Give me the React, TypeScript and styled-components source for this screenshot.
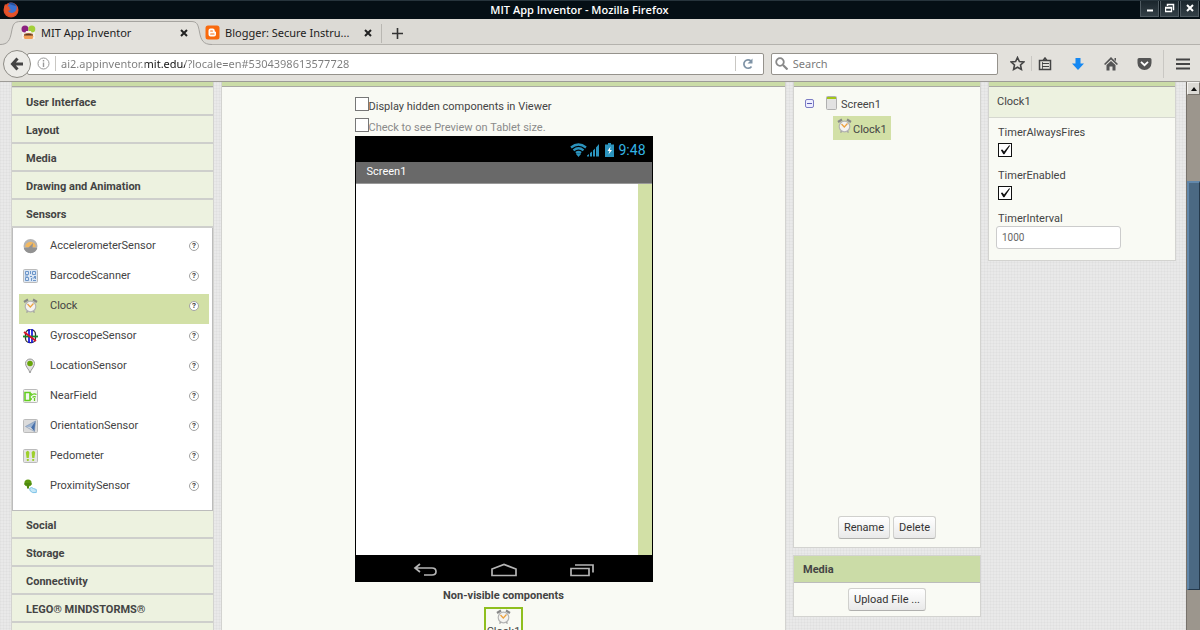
import React from "react";
import styled, { createGlobalStyle } from "styled-components";

const Global = createGlobalStyle`
  * { box-sizing: border-box; }
  body { margin: 0; overflow: hidden; }
  button, input { font: inherit; color: inherit; }
  svg { flex: none; }
`;

const line = "#bcbcbc";

/* ---------- browser window ---------- */

const Window = styled.div`
  height: 100vh;
  display: flex;
  flex-direction: column;
  overflow: hidden;
  font: 11px/16px "Noto Sans", sans-serif;
  color: #1c1c1c;
`;

const TitleBar = styled.header`
  flex: none;
  display: flex;
  align-items: center;
  height: 19px;
  padding-left: 3px;
  background: #050f15;
  border-top: 1px solid #27343c;
  color: #fff;
`;

const WindowTitle = styled.div`
  flex: 1;
  text-align: center;
  font-family: "Open Sans", sans-serif;
  font-weight: 600;
`;

const WindowButton = styled.button`
  display: flex;
  align-items: center;
  justify-content: center;
  width: 19px;
  height: 16px;
  margin-bottom: 3px;
  margin-right: 1px;
  padding: 0;
  border: 1px solid #4f5a61;
  border-top: 0;
  background: linear-gradient(#1a252c, #333f46);
`;

const TabStrip = styled.nav`
  flex: none;
  display: flex;
  height: 27px;
  background: linear-gradient(#dcdad5 25px, #b4b2ad 25px, #b4b2ad 26px, #e3e1dc 26px);
`;

const TabEdge = styled.svg<{ $end?: boolean }>`
  width: 21px;
  height: 27px;
  margin-right: ${(p) => (p.$end ? -7 : 0)}px;
`;

const Tab = styled.div<{ $active?: boolean }>`
  display: flex;
  align-items: center;
  width: 170px;
  height: ${(p) => (p.$active ? 27 : 26)}px;
  padding-top: ${(p) => (p.$active ? 0 : 1)}px;
  gap: 5px;
  background: ${(p) => (p.$active ? "#e3e1dc" : "transparent")};
  box-shadow: ${(p) => (p.$active ? "inset 0 2px #dcdad5, inset 0 3px #a5a39f" : "none")};
`;

const TabTitle = styled.a`
  flex: 1;
  color: #1c1c1c;
  text-decoration: none;
  white-space: nowrap;
`;

const TabClose = styled.button`
  display: flex;
  margin-right: 3px;
  padding: 0;
  border: 0;
  background: none;
`;

const NewTab = styled.button`
  display: flex;
  align-items: center;
  height: 19px;
  margin: 5px 0 0 6px;
  padding: 0 10px;
  border: 0;
  border-left: 1px solid #b9b7b2;
  background: none;
`;

const NavBar = styled.div`
  flex: none;
  display: flex;
  align-items: center;
  height: 36px;
  padding: 0 10px 0 3px;
  background: #e3e1dc;
  border-bottom: 1px solid #9d9b97;
`;

const BackButton = styled.button`
  position: relative;
  display: flex;
  align-items: center;
  justify-content: center;
  flex: none;
  width: 28px;
  height: 28px;
  padding: 0;
  border: 1px solid #8d8b85;
  border-radius: 50%;
  background: #ecebe7;
`;

const Field = styled.div<{ $size: number; $joined?: boolean }>`
  flex: ${(p) => `${p.$size} 1 ${p.$size}px`};
  display: flex;
  align-items: center;
  gap: 5px;
  height: 22px;
  min-width: 0;
  margin-left: ${(p) => (p.$joined ? -4 : 7)}px;
  padding: 0 8px 0 ${(p) => (p.$joined ? 9 : 3)}px;
  background: #fff;
  border: 1px solid #95928c;
  border-radius: 2px;
`;

const Divider = styled.span<{ $tall?: boolean }>`
  flex: none;
  width: 1px;
  height: ${(p) => (p.$tall ? 28 : 15)}px;
  background: #c9c7c3;
`;

const AddressInput = styled.input`
  flex: 1;
  min-width: 0;
  padding: 0;
  border: 0;
  outline: 0;
  color: transparent;
  background: linear-gradient(to right, #7b7b7b 84px, #111 84px, #111 124px, #7b7b7b 124px);
  background-clip: text;
  -webkit-background-clip: text;
`;

const SearchInput = styled.input`
  flex: 1;
  min-width: 0;
  padding: 0;
  border: 0;
  outline: 0;
  background: transparent;
  &::placeholder { color: #7b7b7b; opacity: 1; }
`;

const PlainButton = styled.button`
  display: flex;
  padding: 0;
  border: 0;
  background: none;
`;

const ToolIcons = styled.div`
  flex: none;
  display: flex;
  align-items: center;
  gap: 11px;
  margin-left: 12px;
`;

const IconGroup = styled.div<{ $gap: number }>`
  display: flex;
  align-items: center;
  gap: ${(p) => p.$gap}px;
`;

/* ---------- page ---------- */

const Page = styled.main`
  flex: 1;
  display: flex;
  min-height: 0;
  background-color: #e9e9e9;
  background-image:
    repeating-linear-gradient(90deg, rgba(0, 0, 0, 0.025) 0 1px, transparent 1px 3px),
    repeating-linear-gradient(rgba(0, 0, 0, 0.025) 0 1px, transparent 1px 3px);
  font: 11px/14px Roboto, sans-serif;
  color: #444;
`;

const Columns = styled.div`
  flex: 1;
  display: grid;
  grid-template-columns: 203px minmax(300px, 1fr) 188px 188px;
  column-gap: 7px;
  align-items: start;
  padding: 0 10px 0 11px;
  min-width: 0;
`;

const Panel = styled.section`
  background: #f9faf4;
  border: 1px solid #d3d3d0;
  border-top: 0;
  &::before {
    content: "";
    display: block;
    height: 4px;
    background: #cbdca7;
    border-bottom: 1px solid #a9a9a3;
  }
`;

const Palette = styled.div`
  border-top: 1px solid #d8d9d5;
`;

const Category = styled.button`
  display: block;
  width: 100%;
  height: 28px;
  padding: 3px 14px 0;
  border: 0;
  border-bottom: 2px solid #cecfcc;
  background: #edf2e0;
  color: #444;
  font-weight: 700;
  text-align: left;
`;

const ItemList = styled.ul`
  list-style: none;
  margin: 0;
  padding: 6px 3px 6px 6px;
  background: #fff;
  border: 1px solid ${line};
  border-width: 0 1px 1px;
`;

const Item = styled.li<{ $selected?: boolean }>`
  display: flex;
  align-items: center;
  height: 30px;
  padding: 0 10px 7px 4px;
  background: ${(p) => (p.$selected ? "#d2e0a6" : "transparent")};
`;

const ItemButton = styled.button`
  flex: 1;
  display: flex;
  align-items: center;
  gap: 12px;
  padding: 0;
  border: 0;
  background: none;
  text-align: left;
`;

const Help = styled.button`
  display: flex;
  align-items: center;
  justify-content: center;
  width: 10px;
  height: 10px;
  padding: 0;
  border: 1px solid #a3a3a3;
  border-radius: 50%;
  background: #fff;
  font-size: 8px;
  line-height: 8px;
  font-weight: 700;
`;

const ViewerPanel = styled(Panel)`
  min-height: 100vh;
`;

const ViewerBody = styled.div`
  width: 298px;
  margin: 0 auto;
  padding-top: 10px;
`;

const CheckRow = styled.label<{ $muted?: boolean }>`
  display: flex;
  align-items: flex-start;
  height: 21px;
  white-space: nowrap;
  color: ${(p) => (p.$muted ? "#8b8b8b" : "#444")};
  span { padding-top: 3px; }
`;

const CheckBox = styled.input.attrs({ type: "checkbox" })`
  appearance: none;
  flex: none;
  display: block;
  width: 14px;
  height: 14px;
  margin: 0;
  border: 1px solid #777;
  background: #fff;
  &:checked { border: 1px solid #111; }
  &:checked::before {
    content: "";
    display: block;
    width: 12px;
    height: 12px;
    background: #111;
    clip-path: polygon(15% 50%, 28% 45%, 42% 62%, 85% 10%, 92% 14%, 45% 86%, 36% 86%);
  }
`;

const Phone = styled.div`
  margin-top: -3px;
  border: 1px solid #000;
  background: #fff;
`;

const StatusBar = styled.div`
  display: flex;
  align-items: center;
  justify-content: flex-end;
  gap: 5px;
  height: 25px;
  padding-right: 6px;
  background: #000;
  color: #33b5e5;
  font-size: 14px;
`;

const ScreenTitle = styled.div`
  height: 22px;
  padding: 3px 11px;
  background: #696969;
  border-bottom: 1px solid #999;
  color: #fff;
`;

const Screen = styled.div`
  display: flex;
  justify-content: flex-end;
  height: 371px;
`;

const ScreenGutter = styled.div`
  width: 14px;
  background: #d2e0a6;
`;

const PhoneNav = styled.div`
  display: flex;
  align-items: center;
  justify-content: center;
  gap: 51px;
  height: 26px;
  padding-top: 3px;
  background: #000;
`;

const NonVisibleTitle = styled.h2`
  margin: 7px 0 4px;
  font-size: 11px;
  line-height: 14px;
  text-align: center;
`;

const NonVisibleItem = styled.div`
  display: flex;
  flex-direction: column;
  align-items: center;
  width: 39px;
  margin: 0 auto;
  border: 2px solid #8fbf1f;
`;

const Stack = styled.div`
  display: flex;
  flex-direction: column;
  gap: 7px;
`;

const TreeArea = styled.div`
  height: 429px;
  padding: 6px 11px;
`;

const TreeRow = styled.div`
  display: flex;
  align-items: center;
  height: 20px;
  margin-bottom: 3px;
  gap: 3px;
  span { padding-top: 4px; }
`;

const Toggle = styled.button`
  display: flex;
  align-items: center;
  justify-content: center;
  width: 9px;
  height: 9px;
  margin-right: 9px;
  padding: 0;
  border: 1px solid #7c7cc4;
  border-radius: 2px;
  background: #eef;
  &::before {
    content: "";
    width: 5px;
    height: 1px;
    background: #5b5bb0;
  }
`;

const TreeChild = styled.button`
  display: flex;
  align-items: center;
  gap: 1px;
  height: 24px;
  margin-left: 28px;
  padding: 0 4px;
  border: 0;
  background: #d2e0a6;
  svg { margin-bottom: 4px; }
  span { padding-top: 3px; }
`;

const ButtonRow = styled.div<{ $short?: boolean }>`
  display: flex;
  justify-content: center;
  gap: 3px;
  padding: ${(p) => (p.$short ? "5px 0" : "0 0 8px")};
`;

const PushButton = styled.button`
  height: 23px;
  padding: 0 5px;
  border: 1px solid #d0d0cd;
  border-bottom-color: #b0b0ae;
  border-radius: 3px;
  background: linear-gradient(#fff, #e9e9e9);
  color: #333;
`;

const MediaPanel = styled.section`
  background: #f9faf4;
  border: 1px solid #d3d3d0;
`;

const MediaTitle = styled.h2`
  margin: 0;
  height: 27px;
  padding: 7px 9px;
  background: #cbdca7;
  border-bottom: 1px solid ${line};
  font-size: 11px;
  line-height: 14px;
`;

const PropsTitle = styled.h2`
  margin: 0;
  height: 31px;
  padding: 8px;
  background: #edf2e0;
  border-bottom: 1px solid #d6d8d0;
  font-size: 11px;
  line-height: 14px;
  font-weight: 400;
`;

const PropsBody = styled.div`
  padding: 8px 7px 11px;
`;

const Property = styled.div`
  height: 43px;
  padding-left: 2px;
  label { display: block; margin-bottom: 3px; }
`;

const IntervalProperty = styled.div`
  label { display: block; margin: 0 0 0 2px; }
`;

const NumberInput = styled.input`
  display: block;
  width: 125px;
  height: 23px;
  padding: 0 5px;
  border: 1px solid #ccc;
  border-radius: 3px;
  background: #fff;
  color: #666;
  font-size: 10px;
`;

const ScrollTrack = styled.div`
  flex: none;
  display: flex;
  flex-direction: column;
  width: 14px;
  background: #9c968d;
  border-left: 1px solid #77726b;
`;

const ScrollUp = styled.button`
  display: flex;
  align-items: center;
  justify-content: center;
  height: 13px;
  padding: 0;
  border: 1px solid #f4f3f0;
  border-right-color: #77726b;
  border-bottom-color: #77726b;
  background: #dcdad5;
`;

const ScrollGap = styled.div<{ $size: number }>`
  flex: ${(p) => p.$size};
`;

const ScrollThumb = styled.div`
  flex: 409;
  background: #4b6983;
  border: 1px solid #6288ab;
  border-width: 2px 1px 1px 2px;
  border-right-color: #24384a;
  border-bottom-color: #24384a;
`;

/* ---------- drawings ---------- */

const ClockIcon = () => (
  <svg width="15" height="16" viewBox="0 0 15 16" fill="none">
    <path d="M1 4 5 1.500M14 4 10 1.500" stroke="#888" strokeWidth="2.200" />
    <path d="M3.500 14.500 5 13M11.500 14.500 10 13" stroke="#999" strokeWidth="1.300" />
    <circle cx="7.500" cy="8.500" r="5.300" fill="#f4f3f0" stroke="#b4b4b4" strokeWidth="1.200" />
    <path d="m4.500 6 2.800 3L10.500 5.500" stroke="#eba13f" strokeWidth="1.200" />
  </svg>
);

const Frame = ({ children, fill = "#e4e4e4" }: { children: React.ReactNode; fill?: string }) => (
  <svg width="15" height="16" viewBox="0 0 15 16" fill="none">
    <rect x=".5" y="1.500" width="14" height="13" rx="1" fill={fill} stroke="#bbb" />
    {children}
  </svg>
);

const sensorIcons: Record<string, React.ReactNode> = {
  AccelerometerSensor: (
    <svg width="15" height="16" viewBox="0 0 15 16">
      <circle cx="7.500" cy="8" r="7" fill="#b4b4b4" />
      <path d="M2.200 9a5.300 5.300 0 0 1 10.600 0l-2.500.5H5z" fill="#f2b860" />
      <path d="M.8 10 5.500 9.500 10 5l-.5 4.500 4.800.5A7 7 0 0 1 .8 10Z" fill="#929292" />
    </svg>
  ),
  BarcodeScanner: (
    <Frame fill="#dbe6f3">
      <path d="M2.500 3.500h3v3h-3zM9.500 3.500h3v3h-3zM2.500 9.500h3v3h-3zM7.500 3v3M7 8.500h2M2 8h3M8.500 10v3M11.500 8v2h-2M10 12.500h3M12.500 8v3" stroke="#6d96c9" />
    </Frame>
  ),
  Clock: <ClockIcon />,
  GyroscopeSensor: (
    <svg width="15" height="16" viewBox="0 0 15 16" fill="none">
      <rect x="2.500" y="2" width="10" height="12.500" rx="4" stroke="#333" strokeWidth="1.300" />
      <path d="M6 1v14M9 1v14" stroke="#1414dc" strokeWidth="1.700" />
      <path d="M7.500 2v12" stroke="#fff" />
      <path d="M0 8.500h15" stroke="#168a28" strokeWidth="1.800" />
      <path d="m1 4 12 9" stroke="#d81428" strokeWidth="1.800" />
    </svg>
  ),
  LocationSensor: (
    <svg width="15" height="16" viewBox="0 0 15 16">
      <path d="M7 15C6 11 2.500 9 2.500 5.500a4.500 4.500 0 0 1 9 0C11.500 9 8 11 7 15Z" fill="#e2e2e2" stroke="#999" />
      <circle cx="7" cy="5.500" r="2.800" fill="#68a50a" />
    </svg>
  ),
  NearField: (
    <Frame fill="#f4f7f0">
      <path d="M2 4.500h5v8H2zM7 6h2M7 11h2" stroke="#63cd20" strokeWidth="1.600" />
      <path d="M8 7.500c2-2 4-2 5.500-1M9.500 9.500c1-1 2-1 3.500-.5M11.500 10v3" stroke="#63cd20" strokeWidth="1.300" />
    </Frame>
  ),
  OrientationSensor: (
    <Frame fill="#dcdcdc">
      <path d="M12.500 3 2.500 8.500 8 9.500z" fill="#9eb6d4" />
      <path d="M12.500 3 8 9.500 11.500 13.500z" fill="#4972ad" />
      <path d="M12.500 3 2.500 8.500 11.500 13.500z" stroke="#7890b0" strokeWidth=".6" />
    </Frame>
  ),
  Pedometer: (
    <Frame>
      <path d="M2.800 4.500q2-3.500 3.600 0L5.800 10H3.600zM8.600 4.500q2-3.500 3.600 0L11.400 10H9.200zM3.800 11h2v1.500q-1 1-2 0zM9.200 11h2v1.500q-1 1-2 0z" fill="#9ed02c" />
    </Frame>
  ),
  ProximitySensor: (
    <svg width="15" height="16" viewBox="0 0 15 16" fill="none">
      <circle cx="5" cy="5" r="3.600" fill="#5d9a10" />
      <path d="M1.500 6h7M5 7v3.500" stroke="#4f8a10" strokeWidth="2" />
      <path d="M6.500 10.500q2-2 4 0l2.800 1v3q-4 1-6-1.500z" fill="#c6e7f7" stroke="#7fc4e8" />
    </svg>
  ),
};

const CloseGlyph = ({ color = "#222" }: { color?: string }) => (
  <svg width="8" height="8" viewBox="0 0 8 8">
    <path d="m1 1 6 6M7 1 1 7" stroke={color} strokeWidth="2" />
  </svg>
);

const FirefoxLogo = () => (
  <svg width="16" height="16" viewBox="0 0 16 16">
    <circle cx="8" cy="8" r="7.500" fill="#dd4a26" />
    <circle cx="9" cy="6.500" r="5" fill="#3b72d1" />
    <path d="M2 2q-2 5 0 8 3 5 8 4 5-2 5-8l-1-2q0 6-5 7-3 0-4-2l3-1-2-2 1-1-3-1z" fill="#e5532a" />
    <path d="M5 1.500q3-2 7 .5l1 2-4-1z" fill="#2453a0" />
  </svg>
);

const InventorLogo = () => (
  <svg width="15" height="15" viewBox="0 0 15 15">
    <path d="M1 3h13v11H1z" fill="#f2efe9" />
    <circle cx="4" cy="4" r="3.500" fill="#8c2180" />
    <circle cx="10.800" cy="4" r="3.500" fill="#a3cf39" />
    <path d="M5 6h5l1 3H4z" fill="#f7f1e8" />
    <path d="M3 9q4.500-2 9 0v2.500H3z" fill="#a86a3d" />
    <path d="M2.500 11h10l-1 3h-8z" fill="#f2a057" />
    <path d="M4.500 9.500h6" stroke="#5d3a20" />
  </svg>
);

const BloggerLogo = () => (
  <svg width="15" height="15" viewBox="0 0 15 15" fill="none">
    <rect x=".5" y=".5" width="14" height="14" rx="2.500" fill="#f96a0e" />
    <path d="M5.500 3.500h2.200a2 2 0 0 1 2 2c0 1 .3 1.200 1.300 1.300v2.700a2 2 0 0 1-2 2H5.500a2 2 0 0 1-2-2v-4a2 2 0 0 1 2-2Z" fill="#fff" />
    <path d="M5.700 6h1.700M5.700 9h3.300" stroke="#f96a0e" strokeWidth="1.200" strokeLinecap="round" />
  </svg>
);

const items = [
  "AccelerometerSensor", "BarcodeScanner", "Clock", "GyroscopeSensor", "LocationSensor",
  "NearField", "OrientationSensor", "Pedometer", "ProximitySensor",
];

export default function App() {
  return (
    <Window>
      <Global />
      <TitleBar>
        <FirefoxLogo />
        <WindowTitle>MIT App Inventor - Mozilla Firefox</WindowTitle>
        <WindowButton aria-label="Minimize">
          <svg width="10" height="10"><path d="M2 7.500h6" stroke="#fff" strokeWidth="2" /></svg>
        </WindowButton>
        <WindowButton aria-label="Restore">
          <svg width="10" height="10" fill="none" stroke="#fff"><path d="M.5 4.500h6v4h-6zM.5 5h6" strokeWidth="1.300" /><path d="M2.500 3V1.500h6v5H8" strokeWidth="1.500" /></svg>
        </WindowButton>
        <WindowButton aria-label="Close"><CloseGlyph color="#fff" /></WindowButton>
      </TitleBar>

      <TabStrip>
        <TabEdge viewBox="0 0 21 27">
          <path d="M0 25.500C8 25.500 10 21 11.500 13 13 5 14 2.500 21 2.500V27H0Z" fill="#e3e1dc" />
          <path d="M0 25.500C8 25.500 10 21 11.500 13 13 5 14 2.500 21 2.500" fill="none" stroke="#a5a39f" />
        </TabEdge>
        <Tab $active>
          <InventorLogo />
          <TabTitle href="#app-inventor">MIT App Inventor</TabTitle>
          <TabClose aria-label="Close tab"><CloseGlyph /></TabClose>
        </Tab>
        <TabEdge $end viewBox="0 0 21 27">
          <path d="M0 2.500C6 2.500 7 5 8.500 13 10 21 12 25.500 21 25.500V27H0Z" fill="#e3e1dc" />
          <path d="M0 2.500C6 2.500 7 5 8.500 13 10 21 12 25.500 21 25.500" fill="none" stroke="#a5a39f" />
        </TabEdge>
        <Tab>
          <BloggerLogo />
          <TabTitle href="#blogger">Blogger: Secure Instru...</TabTitle>
          <TabClose aria-label="Close tab"><CloseGlyph /></TabClose>
        </Tab>
        <NewTab aria-label="New tab">
          <svg width="11" height="11"><path d="M5.500 0v11M0 5.500h11" stroke="#333" strokeWidth="1.600" /></svg>
        </NewTab>
      </TabStrip>

      <NavBar>
        <BackButton aria-label="Back">
          <svg width="14" height="14" fill="none" stroke="#444"><path d="M7.500 1.500 2.500 7l5 5.500M3 7h10" strokeWidth="3" /></svg>
        </BackButton>
        <Field $size={736} $joined>
          <svg width="13" height="13" fill="none" stroke="#999"><circle cx="6.500" cy="6.500" r="5.500" /><path d="M6.500 5.500V10M6.500 3v1.500" strokeWidth="1.400" /></svg>
          <Divider />
          <AddressInput aria-label="Address" defaultValue="ai2.appinventor.mit.edu/?locale=en#5304398613577728" />
          <Divider />
          <PlainButton aria-label="Reload">
            <svg width="14" height="12" viewBox="4 0 14 12" fill="none"><path d="M14.500 8.500A4.200 4.200 0 1 1 14 3" stroke="#7f93a6" strokeWidth="1.700" /><path d="M15.500.5v5h-5z" fill="#7f93a6" /></svg>
          </PlainButton>
        </Field>
        <Field $size={227}>
          <svg width="13" height="13" fill="none" stroke="#888"><circle cx="5" cy="5" r="3.800" strokeWidth="1.800" /><path d="m8 8 4.500 4.500" strokeWidth="2.200" /></svg>
          <SearchInput aria-label="Search" placeholder="Search" />
        </Field>
        <ToolIcons>
          <IconGroup $gap={19}>
            <IconGroup $gap={6}>
              <PlainButton aria-label="Bookmark this page">
                <svg width="15" height="15" viewBox="0 0 15 15" fill="none"><path d="m7.500 1.500 1.900 4 4.300.5-3.200 3 .9 4.400-3.900-2.200-3.900 2.200.9-4.400-3.200-3 4.300-.5z" stroke="#444" strokeWidth="1.600" /></svg>
              </PlainButton>
              <Divider />
              <PlainButton aria-label="Bookmarks">
                <svg width="14" height="14" viewBox="0 0 14 14" fill="none" stroke="#444"><path d="M1.500 3.500h11v9h-11zM5 3.500 7 1l2 2.500" strokeWidth="1.500" /><path d="M4 6.500h7M4 9.500h7" strokeWidth="1.200" /><path d="M4.500 5v7" strokeWidth=".8" /></svg>
              </PlainButton>
            </IconGroup>
            <PlainButton aria-label="Downloads">
              <svg width="14" height="14"><path d="M4.500 1h5v5.500H13L7 13 1 6.500h3.500z" fill="#1588f2" /></svg>
            </PlainButton>
            <PlainButton aria-label="Home">
              <svg width="14" height="14"><path d="M7 0 14 7l-1.200 1L7 2.500 1.200 8 0 7zM10.500 1H12v3l-1.500-1zM2.500 8 7 4l4.500 4v5.500h-3V9.500h-3v4h-3z" fill="#555" /></svg>
            </PlainButton>
            <PlainButton aria-label="Pocket">
              <svg width="15" height="14" viewBox="0 0 15 14"><path d="M2 1h11q1.500 0 1.500 1.500V6a7 7 0 0 1-14 0V2.500Q.5 1 2 1Z" fill="#555" /><path d="m4 4.800 3.500 3.400L11 4.800" fill="none" stroke="#fff" strokeWidth="1.800" /></svg>
            </PlainButton>
          </IconGroup>
          <IconGroup $gap={12}>
            <Divider $tall />
            <PlainButton aria-label="Menu">
              <svg width="14" height="12"><path d="M0 1.500h14M0 6h14M0 10.500h14" stroke="#444" strokeWidth="2" /></svg>
            </PlainButton>
          </IconGroup>
        </ToolIcons>
      </NavBar>

      <Page>
        <Columns>
          <Panel>
            <Palette>
              {["User Interface", "Layout", "Media", "Drawing and Animation", "Sensors"].map((c) => (
                <Category key={c}>{c}</Category>
              ))}
              <ItemList>
                {items.map((name) => (
                  <Item key={name} $selected={name === "Clock"}>
                    <ItemButton>{sensorIcons[name]}{name}</ItemButton>
                    <Help aria-label={`About ${name}`}>?</Help>
                  </Item>
                ))}
              </ItemList>
              {["Social", "Storage", "Connectivity", "LEGO® MINDSTORMS®"].map((c) => (
                <Category key={c}>{c}</Category>
              ))}
              <Category aria-label="More" />
            </Palette>
          </Panel>

          <ViewerPanel>
            <ViewerBody>
              <CheckRow><CheckBox /><span>Display hidden components in Viewer</span></CheckRow>
              <CheckRow $muted><CheckBox /><span>Check to see Preview on Tablet size.</span></CheckRow>
              <Phone>
                <StatusBar>
                  <svg width="30" height="14" viewBox="0 0 30 14" fill="none">
                    <path d="M1 4.500q7.500-6 15 0M3.500 7.300q5-4 10 0M6 10q2.500-2 5 0" stroke="#2b93bd" strokeWidth="2.300" />
                    <path d="m6 11 2.500 3 2.500-3q-2.500-1.500-5 0Z" fill="#2b93bd" />
                    <path d="M17 13.500h2V11l-2 1.500zM20 13.500h2V8.500L20 10zM23 13.500h2V5.500L23 7.500zM26 13.500h3V1L26 4.500z" fill="#2b93bd" />
                  </svg>
                  <svg width="9" height="14" viewBox="0 0 9 14"><path d="M3 0h3v1.500h3V14H0V1.500h3z" fill="#2b93bd" /><path d="m5.500 3.500-3 4.500h2L3.500 11.500 7 7H5z" fill="#fff" /></svg>
                  <span>9:48</span>
                </StatusBar>
                <ScreenTitle>Screen1</ScreenTitle>
                <Screen><ScreenGutter /></Screen>
                <PhoneNav>
                  <svg width="26" height="14" fill="none" stroke="#b5b5b5" strokeWidth="1.700"><path d="M7 1 2 5l5 4M2 5h17q4 0 4 3.500T19 12h-8" /></svg>
                  <svg width="28" height="14" fill="none" stroke="#b5b5b5" strokeWidth="1.700"><path d="M2 12.500V6l12-4.500L26 6v6.500z" /></svg>
                  <svg width="26" height="14" fill="none" stroke="#b5b5b5" strokeWidth="1.700"><path d="M2 5.500h18v7H2zM6 2h18v7.500" /></svg>
                </PhoneNav>
              </Phone>
              <NonVisibleTitle>Non-visible components</NonVisibleTitle>
              <NonVisibleItem><ClockIcon /><span>Clock1</span></NonVisibleItem>
            </ViewerBody>
          </ViewerPanel>

          <Stack>
            <Panel>
              <TreeArea>
                <TreeRow>
                  <Toggle aria-label="Collapse" />
                  <svg width="12" height="15" viewBox="0 0 12 15"><rect x=".5" y=".5" width="10" height="13" rx="1" fill="#e2e2e2" stroke="#b0b0b0" /><path d="M1 1h9v2H1z" fill="#a2c617" /></svg>
                  <span>Screen1</span>
                </TreeRow>
                <TreeChild><ClockIcon /><span>Clock1</span></TreeChild>
              </TreeArea>
              <ButtonRow>
                <PushButton>Rename</PushButton>
                <PushButton>Delete</PushButton>
              </ButtonRow>
            </Panel>
            <MediaPanel>
              <MediaTitle>Media</MediaTitle>
              <ButtonRow $short><PushButton>Upload File ...</PushButton></ButtonRow>
            </MediaPanel>
          </Stack>

          <Panel>
            <PropsTitle>Clock1</PropsTitle>
            <PropsBody>
              <Property>
                <label htmlFor="always">TimerAlwaysFires</label>
                <CheckBox id="always" defaultChecked />
              </Property>
              <Property>
                <label htmlFor="enabled">TimerEnabled</label>
                <CheckBox id="enabled" defaultChecked />
              </Property>
              <IntervalProperty>
                <label htmlFor="interval">TimerInterval</label>
                <NumberInput id="interval" defaultValue="1000" />
              </IntervalProperty>
            </PropsBody>
          </Panel>
        </Columns>

        <ScrollTrack>
          <ScrollUp aria-label="Scroll up">
            <svg width="6" height="4"><path d="M0 4h6L3 0z" fill="#111" /></svg>
          </ScrollUp>
          <ScrollGap $size={86} />
          <ScrollThumb />
          <ScrollGap $size={40} />
        </ScrollTrack>
      </Page>
    </Window>
  );
}
